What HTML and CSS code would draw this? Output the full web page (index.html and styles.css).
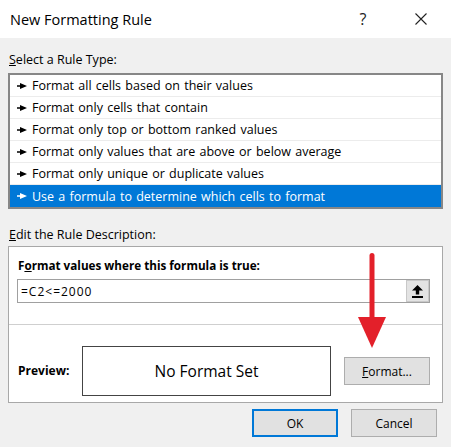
FILE: index.html
```html
<!DOCTYPE html>
<html>
<head>
<meta charset="utf-8">
<link rel="stylesheet" href="styles.css">
</head>
<body>
<div class="dialog">
  <div class="titlebar">
    <span class="title">New Formatting Rule</span>
    <span class="tb-btn help">?</span>
    <span class="tb-btn close">
      <svg width="12" height="12" viewBox="0 0 12 12"><path d="M0.5 0.5 L11.5 11.5 M11.5 0.5 L0.5 11.5" stroke="#222" stroke-width="1.1" fill="none"/></svg>
    </span>
  </div>
  <div class="content">
    <div class="label top-label"><u>S</u>elect a Rule Type:</div>
    <div class="listbox">
      <div class="row"><svg class="pointer" width="10" height="6" viewBox="0 0 10 6"><path d="M0 2.3 H3 V0 L10 3 L3 6 V3.7 H0 Z" fill="currentColor"/></svg>Format all cells based on their values</div>
      <div class="row"><svg class="pointer" width="10" height="6" viewBox="0 0 10 6"><path d="M0 2.3 H3 V0 L10 3 L3 6 V3.7 H0 Z" fill="currentColor"/></svg>Format only cells that contain</div>
      <div class="row"><svg class="pointer" width="10" height="6" viewBox="0 0 10 6"><path d="M0 2.3 H3 V0 L10 3 L3 6 V3.7 H0 Z" fill="currentColor"/></svg>Format only top or bottom ranked values</div>
      <div class="row"><svg class="pointer" width="10" height="6" viewBox="0 0 10 6"><path d="M0 2.3 H3 V0 L10 3 L3 6 V3.7 H0 Z" fill="currentColor"/></svg>Format only values that are above or below average</div>
      <div class="row"><svg class="pointer" width="10" height="6" viewBox="0 0 10 6"><path d="M0 2.3 H3 V0 L10 3 L3 6 V3.7 H0 Z" fill="currentColor"/></svg>Format only unique or duplicate values</div>
      <div class="row selected"><svg class="pointer" width="10" height="6" viewBox="0 0 10 6"><path d="M0 2.3 H3 V0 L10 3 L3 6 V3.7 H0 Z" fill="currentColor"/></svg>Use a formula to determine which cells to format</div>
    </div>
    <div class="label edit-label"><u>E</u>dit the Rule Description:</div>
    <div class="descbox">
      <div class="bold-label">F<u>o</u>rmat values where this formula is true:</div>
      <div class="formula">
        <span class="formula-text">=C2&lt;=2000</span>
        <span class="ref-btn">
          <svg width="11" height="13" viewBox="0 0 11 13"><path d="M5.5 0 L11 5.5 H7.2 V9.5 H3.8 V5.5 H0 Z" fill="#000"/><rect x="0" y="11" width="11" height="2" fill="#000"/></svg>
        </span>
      </div>
      <div class="sep"></div>
      <div class="preview-row">
        <span class="bold-label preview-label">Preview:</span>
        <div class="preview-box">No Format Set</div>
        <span class="btn format-btn"><u>F</u>ormat...</span>
      </div>
    </div>
  </div>
  <div class="footer">
    <span class="btn ok">OK</span>
    <span class="btn">Cancel</span>
  </div>
  <svg class="red-arrow" width="30" height="98" viewBox="0 0 30 98">
    <rect x="11.5" y="0" width="5" height="70" rx="2.5" fill="#e3202a"/>
    <path d="M0 64 H28 L14 95 Z" fill="#e3202a"/>
  </svg>
</div>
</body>
</html>
```

FILE: styles.css
```css
html, body {
  margin: 0;
  padding: 0;
}
body {
  width: 451px;
  height: 447px;
  overflow: hidden;
  background: #f0f0f0;
  font-family: "Open Sans", "Noto Sans", "Liberation Sans", sans-serif;
  font-size: 12.5px;
  color: #000;
}
.dialog {
  position: relative;
  width: 451px;
  height: 447px;
}
.titlebar {
  height: 38px;
  background: #fff;
  display: flex;
  align-items: center;
  padding-left: 10px;
}
.title {
  font-size: 14.5px;
  flex: 1;
  color: #000;
}
.tb-btn {
  width: 46px;
  height: 38px;
  display: flex;
  align-items: center;
  justify-content: center;
}
.help {
  font-size: 16px;
  color: #222;
  margin-right: 12px;
}
.close {
  margin-right: 7px;
}
.content {
  padding: 0 8px;
}
.label {
  line-height: 16px;
  height: 16px;
}
.top-label {
  margin-top: 14px;
  margin-bottom: 5px;
  padding-left: 1px;
}
.listbox {
  border: 2px solid #878787;
  background: #fff;
}
.row {
  height: 22px;
  display: flex;
  align-items: center;
  padding-left: 7px;
  box-sizing: border-box;
  border-bottom: 1px solid #ececec;
  word-spacing: 1px;
}
.row.selected {
  background: #0078d7;
  color: #fff;
  border-bottom: none;
}
.pointer {
  margin-right: 5px;
  flex: none;
}
.edit-label {
  margin-top: 18px;
  margin-bottom: 3px;
  padding-left: 1px;
}
.descbox {
  border: 1px solid #a8a8a8;
  background: #fff;
  height: 155px;
}
.bold-label {
  font-weight: 700;
  line-height: 16px;
  font-size: 11.7px;
}
.descbox > .bold-label {
  margin: 10px 0 6px 9px;
}
.formula {
  margin: 0 12px 0 8px;
  height: 24px;
  box-sizing: border-box;
  border: 1px solid #a0a0a0;
  display: flex;
  align-items: center;
  justify-content: space-between;
  font-size: 12px;
}
.formula-text {
  padding-left: 3px;
  letter-spacing: 1px;
}
.ref-btn {
  width: 23px;
  height: 22px;
  box-sizing: border-box;
  background: #e3e3e3;
  border: 1px solid #c8c8c8;
  display: flex;
  align-items: center;
  justify-content: center;
}
.sep {
  height: 1px;
  background: #cfcfcf;
  margin-top: 21px;
}
.preview-row {
  display: flex;
  align-items: center;
  margin-top: 21px;
  padding-left: 9px;
}
.preview-label {
  width: 64px;
  font-size: 12px;
}
.preview-box {
  width: 249px;
  height: 50px;
  box-sizing: border-box;
  border: 1px solid #444;
  display: flex;
  align-items: center;
  justify-content: center;
  font-size: 15.5px;
}
.btn {
  width: 86px;
  height: 28px;
  box-sizing: border-box;
  background: #e1e1e1;
  border: 1px solid #adadad;
  display: flex;
  align-items: center;
  justify-content: center;
  font-size: 12px;
}
.format-btn {
  margin-left: 13px;
}
.footer {
  display: flex;
  justify-content: flex-end;
  gap: 13px;
  padding-right: 14px;
  margin-top: 6px;
}
.btn.ok {
  border: 2px solid #0078d7;
}
.red-arrow {
  position: absolute;
  left: 358px;
  top: 253px;
}
```
